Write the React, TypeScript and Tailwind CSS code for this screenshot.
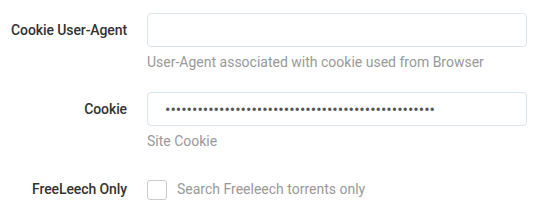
// Settings form rows: cookie user-agent, cookie, freeleech toggle.

const FONT = { fontFamily: "Roboto, 'Liberation Sans', sans-serif" };

function FieldRow({
  label,
  children,
}: {
  label: string;
  children: React.ReactNode;
}) {
  return (
    <div className="flex items-start gap-[20px]">
      <div className="flex h-[34px] w-[127px] shrink-0 items-center justify-end text-[14px] font-medium tracking-[-0.1px] text-[#333]">
        {label}
      </div>
      <div className="w-[380px]">{children}</div>
    </div>
  );
}

export default function App() {
  return (
    <div className="min-h-[211px] bg-white pt-[13px]" style={FONT}>
      <FieldRow label="Cookie User-Agent">
        <input
          type="text"
          className="block h-[34px] w-full rounded-[4px] border border-[#dce4ec] bg-white px-3 text-[14px] text-[#333] outline-none"
        />
        <p className="mt-[5px] text-[14px] leading-[20px] text-[#999]">
          User-Agent associated with cookie used from Browser
        </p>
      </FieldRow>

      <div className="mt-[20px]">
        <FieldRow label="Cookie">
          <input
            type="password"
            defaultValue="abcdefghijklmnopqrstuvwxyzabcdefghijklmnopqrstuvwx"
            className="block h-[34px] w-full rounded-[4px] border border-[#dce4ec] bg-white px-[17px] text-[16px] text-[#555] outline-none"
          />
          <p className="mt-[5px] text-[14px] leading-[20px] text-[#999]">
            Site Cookie
          </p>
        </FieldRow>
      </div>

      <div className="mt-[28px] flex items-center gap-[20px]">
        <div className="w-[127px] shrink-0 text-right text-[14px] font-medium tracking-[-0.1px] text-[#333]">
          FreeLeech Only
        </div>
        <label className="flex items-center gap-[10px] text-[14px] text-[#999]">
          <span className="block size-[20px] rounded-[3px] border border-[#ccc] bg-white" />
          Search Freeleech torrents only
        </label>
      </div>
    </div>
  );
}
